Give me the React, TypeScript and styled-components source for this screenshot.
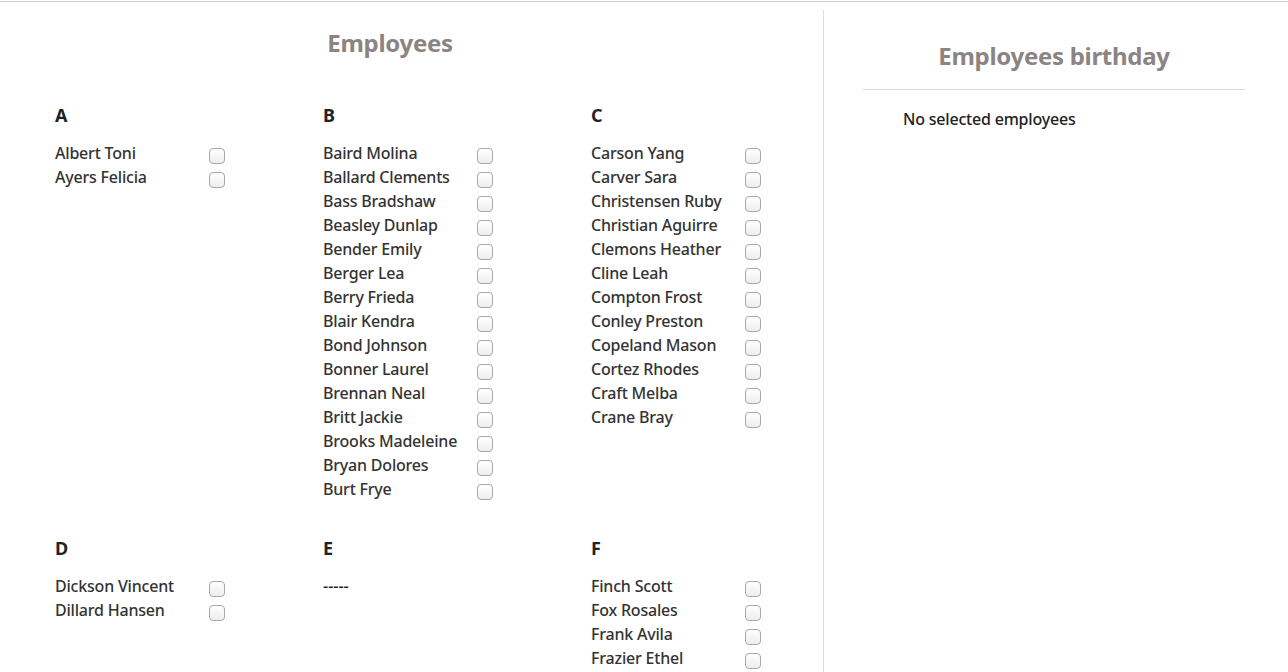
import React from 'react';
import styled, { createGlobalStyle } from 'styled-components';

type Group = {
  letter: string
  names: string[]
}

const groups: Group[] = [
  { letter: 'A', names: ['Albert Toni', 'Ayers Felicia'] },
  {
    letter: 'B',
    names: [
      'Baird Molina', 'Ballard Clements', 'Bass Bradshaw', 'Beasley Dunlap', 'Bender Emily',
      'Berger Lea', 'Berry Frieda', 'Blair Kendra', 'Bond Johnson', 'Bonner Laurel',
      'Brennan Neal', 'Britt Jackie', 'Brooks Madeleine', 'Bryan Dolores', 'Burt Frye',
    ],
  },
  {
    letter: 'C',
    names: [
      'Carson Yang', 'Carver Sara', 'Christensen Ruby', 'Christian Aguirre', 'Clemons Heather',
      'Cline Leah', 'Compton Frost', 'Conley Preston', 'Copeland Mason', 'Cortez Rhodes',
      'Craft Melba', 'Crane Bray',
    ],
  },
  { letter: 'D', names: ['Dickson Vincent', 'Dillard Hansen'] },
  { letter: 'E', names: [] },
  { letter: 'F', names: ['Finch Scott', 'Fox Rosales', 'Frank Avila', 'Frazier Ethel'] },
]

const GlobalStyle = createGlobalStyle`
  html, body {
    margin: 0;
    padding: 0;
    background: #fff;
    overflow: hidden;
  }
  body {
    font-family: "Noto Sans", "Open Sans", sans-serif;
    font-weight: 500;
    color: #333;
  }
`

const TopRule = styled.div`
  height: 1px;
  margin-top: 1px;
  background: #cfcfcf;
`

const Layout = styled.div`
  display: flex;
  align-items: stretch;
  height: 670px;
`

const EmployeesPanel = styled.section`
  width: 824px;
  margin-top: 8px;
  border-right: 1px solid #dcdcdc;
  box-sizing: border-box;
`

const Title = styled.h2<{ $top: number }>`
  margin: ${props => props.$top}px 0 0;
  font-size: 24px;
  line-height: 32px;
  font-weight: 700;
  color: #8a8482;
  text-align: center;
  letter-spacing: -0.3px;
`

const EmployeesTitle = styled(Title)`
  width: 780px;
`

const Groups = styled.div`
  display: grid;
  grid-template-columns: repeat(3, 268px);
  row-gap: 35px;
  padding-left: 55px;
  margin-top: 44px;
`

const GroupBlock = styled.div`
  display: flex;
  flex-direction: column;
`

const Letter = styled.h3`
  margin: 0 0 14px;
  font-size: 18px;
  line-height: 24px;
  font-weight: 700;
  color: #222;
`

const Row = styled.label`
  display: flex;
  align-items: flex-start;
  height: 24px;
`

const Name = styled.span`
  width: 154px;
  font-size: 16px;
  line-height: 24px;
  color: #333;
  white-space: nowrap;
  letter-spacing: -0.2px;
`

const Empty = styled.span`
  font-size: 16px;
  line-height: 24px;
  color: #222;
`

const Check = styled.input`
  appearance: none;
  width: 16px;
  height: 16px;
  margin: 7px 0 0;
  border: 1px solid #a8a8a8;
  border-radius: 4px;
  background: linear-gradient(#ffffff, #ededed);
  box-sizing: border-box;
  &:checked {
    background: #8a8482;
    border-color: #7a7472;
  }
`

const BirthdayPanel = styled.section`
  flex: 1;
  margin-top: 8px;
  padding: 0 43px 0 39px;
`

const Divider = styled.hr`
  margin: 17px 0 0;
  border: none;
  border-top: 1px solid #d8d8d8;
`

const Note = styled.p`
  margin: 17px 0 0 40px;
  font-size: 16px;
  line-height: 24px;
  color: #222;
  letter-spacing: -0.2px;
`

const LetterGroup = ({ letter, names }: Group) => (
  <GroupBlock>
    <Letter>{letter}</Letter>
    {names.length === 0 && <Empty>-----</Empty>}
    {names.map(name => (
      <Row key={name}>
        <Name>{name}</Name>
        <Check type="checkbox" />
      </Row>
    ))}
  </GroupBlock>
)

const App = () => (
  <>
    <GlobalStyle />
    <TopRule />
    <Layout>
      <EmployeesPanel>
        <EmployeesTitle $top={17}>Employees</EmployeesTitle>
        <Groups>
          {groups.map(group => (
            <LetterGroup key={group.letter} {...group} />
          ))}
        </Groups>
      </EmployeesPanel>
      <BirthdayPanel>
        <Title $top={30}>Employees birthday</Title>
        <Divider />
        <Note>No selected employees</Note>
      </BirthdayPanel>
    </Layout>
  </>
)

export default App
